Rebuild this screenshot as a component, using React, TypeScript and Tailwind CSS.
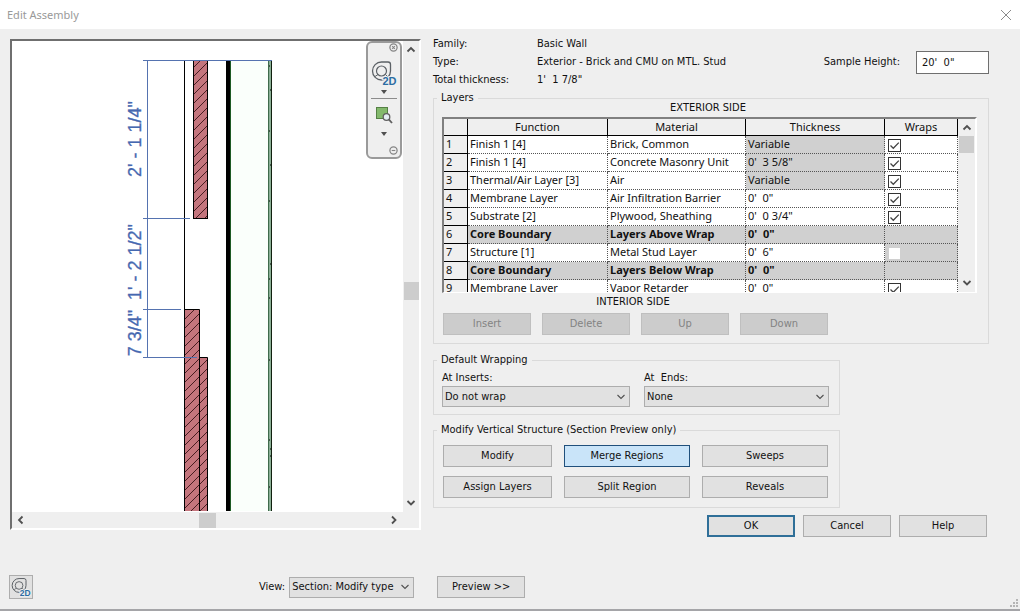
import React from 'react';

type Layer = { fn: string; material: string; thickness: string; fixed?: boolean; core?: boolean; wraps?: boolean };

const layers: Layer[] = [
  { fn: 'Finish 1 [4]', material: 'Brick, Common', thickness: 'Variable', fixed: true, wraps: true },
  { fn: 'Finish 1 [4]', material: 'Concrete Masonry Unit', thickness: '0\'  3 5/8"', fixed: true, wraps: true },
  { fn: 'Thermal/Air Layer [3]', material: 'Air', thickness: 'Variable', fixed: true, wraps: true },
  { fn: 'Membrane Layer', material: 'Air Infiltration Barrier', thickness: '0\'  0"', wraps: true },
  { fn: 'Substrate [2]', material: 'Plywood, Sheathing', thickness: '0\'  0 3/4"', wraps: true },
  { fn: 'Core Boundary', material: 'Layers Above Wrap', thickness: '0\'  0"', core: true },
  { fn: 'Structure [1]', material: 'Metal Stud Layer', thickness: '0\'  6"' },
  { fn: 'Core Boundary', material: 'Layers Below Wrap', thickness: '0\'  0"', core: true },
  { fn: 'Membrane Layer', material: 'Vapor Retarder', thickness: '0\'  0"', wraps: true },
];

const arrows = {
  up: 'M1.500 6.500 L5 3 L8.500 6.500',
  down: 'M1.500 3 L5 6.500 L8.500 3',
  left: 'M6.500 1.500 L3 5 L6.500 8.500',
  right: 'M3 1.500 L6.500 5 L3 8.500',
};

function Arrow({ dir, thin }: { dir: keyof typeof arrows; thin?: boolean }) {
  return (
    <svg viewBox="0 0 10 10" className="size-[10px] shrink-0" fill="none" stroke="#505050" strokeWidth={thin ? 1.1 : 1.8}>
      <path d={arrows[dir]} />
    </svg>
  );
}

function Button({ children, className = '', tone = 'normal' }: { children: React.ReactNode; className?: string; tone?: 'normal' | 'active' | 'default' | 'disabled' }) {
  const tones = {
    normal: 'border border-[#adadad] bg-[#e1e1e1]',
    active: 'border border-[#20507c] bg-[#c9e4f9]',
    default: 'border-2 border-[#2f6f98] bg-[#e1e1e1]',
    disabled: 'border border-[#bfbfbf] bg-[#cccccc] text-[#838383]',
  };
  return (
    <button type="button" disabled={tone === 'disabled'} className={`h-[22px] leading-4 ${tones[tone]} ${className}`}>
      {children}
    </button>
  );
}

function Select({ id, value, className = '' }: { id: string; value: string; className?: string }) {
  return (
    <div className={`relative flex items-center ${className}`}>
      <select id={id} className="h-[21px] w-full appearance-none border border-[#adadad] bg-[#e1e1e1] pl-[2px] pr-4">
        <option>{value}</option>
      </select>
      <span className="pointer-events-none absolute right-1">
        <Arrow dir="down" thin />
      </span>
    </div>
  );
}

function Group({ title, className = '', children }: { title: string; className?: string; children: React.ReactNode }) {
  return (
    <fieldset className={`border border-[#dadada] ${className}`}>
      <legend className="ml-[3px] h-2 px-1 leading-2">{title}</legend>
      {children}
    </fieldset>
  );
}

function WheelIcon({ className }: { className: string }) {
  return (
    <svg viewBox="0 0 26 26" className={className} fill="none" stroke="#5c6166">
      <path d="M10.500 2 H17 Q19.500 2 19.500 4.500 V11 A9 9 0 1 1 10.500 2 Z" strokeWidth="1.300" />
      <circle cx="10.500" cy="11" r="5" strokeWidth="1.200" />
      <path d="M4 16.500 L7 14.500 M14.500 14.500 L17 17" strokeWidth="1" />
      <text x="25.500" y="24.500" textAnchor="end" fontSize="11" fontWeight="bold" fill="#2c6da3" stroke="#efefef" strokeWidth="2" paintOrder="stroke" fontFamily="Liberation Sans, sans-serif">2D</text>
    </svg>
  );
}

function NavBar() {
  return (
    <div className="absolute top-0 right-px flex w-9 flex-col items-center rounded-md border-2 border-[#9a9a9a] bg-[#efefef] pb-[2px]">
      <svg viewBox="0 0 10 10" className="mr-[2px] size-[9px] self-end" fill="none" stroke="#858585">
        <circle cx="5" cy="5" r="4" strokeWidth="1.400" />
        <path d="M3.500 3.500 L6.500 6.500 M6.500 3.500 L3.500 6.500" strokeWidth="1.200" />
      </svg>
      <WheelIcon className="mt-[8px] size-[26px]" />
      <svg viewBox="0 0 6 4" className="mt-1 h-1 w-[6px]" fill="#505050"><path d="M0 0 H6 L3 4 Z" /></svg>
      <div className="my-[4px] h-px w-[26px] bg-[#8c8c8c]" />
      <svg viewBox="0 0 17 17" className="mt-1 size-[17px]">
        <rect x="0.500" y="0.500" width="11" height="11" fill="#83b96c" stroke="#558045" />
        <circle cx="10.500" cy="10" r="3.300" fill="#e4eef4" stroke="#606060" strokeWidth="1.300" />
        <path d="M12.800 12.400 L16 16" stroke="#606060" strokeWidth="1.800" />
      </svg>
      <svg viewBox="0 0 6 4" className="mt-[8px] h-1 w-[6px]" fill="#505050"><path d="M0 0 H6 L3 4 Z" /></svg>
      <svg viewBox="0 0 10 10" className="mt-[10px] mr-[2px] size-[9px] self-end" fill="none" stroke="#858585">
        <circle cx="5" cy="5" r="4" strokeWidth="1.400" />
        <path d="M3 5 H7" strokeWidth="1.200" />
      </svg>
    </div>
  );
}

function SectionDrawing() {
  return (
    <svg viewBox="12 41 391 471" className="block w-full">
      <defs>
        <pattern id="hatch" width="9" height="9" patternUnits="userSpaceOnUse">
          <rect width="9" height="9" fill="#c4757d" />
          <path d="M-1 10 L10 -1 M-1 1 L1 -1 M8 10 L10 8" stroke="#3a1216" strokeWidth="0.900" />
        </pattern>
      </defs>

      {/* stud cavity, sheathing and gypsum */}
      <rect x="230" y="60" width="38" height="451" fill="#fafffb" />
      <rect x="226" y="60" width="4" height="451" fill="#000" />
      <rect x="230" y="60" width="1" height="451" fill="#1d5a24" />
      <rect x="268" y="60" width="4" height="451" fill="#8aaf95" />
      <path d="M268.500 60 V511" stroke="#3f6b4c" />
      <path d="M271.500 60 V511" stroke="#10200f" />
      <path d="M269 66h1M270 90h1M269 131h1M270 165h1M269 201h1M270 264h1M269 279h1M269 298h1M269 360h1M269 440h1M270 449h1M270 456h1M269 487h1" stroke="#000" />

      {/* masonry */}
      <path d="M184.500 60 V511" stroke="#000" />
      <rect x="193.500" y="60.500" width="14" height="158" fill="url(#hatch)" stroke="#000" />
      <path d="M199.500 511 V357.500 H207.500 V511" fill="url(#hatch)" stroke="#000" />
      <path d="M184.500 511 V309.500 H199.500 V511" fill="url(#hatch)" stroke="#000" />

      {/* dimensions */}
      <path d="M147.500 60 V357 M143 60.500 H272 M143 218.500 H190 M143 309.500 H181 M143 357.500 H197" fill="none" stroke="#5573b0" />
      <g fill="#4668b0" stroke="#4668b0" strokeWidth="0.300" fontSize="18" textAnchor="middle" fontFamily="Liberation Sans, Arial, sans-serif">
        <text transform="translate(141 139) rotate(-90)">2' - 1 1/4"</text>
        <text transform="translate(141 262) rotate(-90)">1' - 2 1/2"</text>
        <text transform="translate(141 333) rotate(-90)">7 3/4"</text>
      </g>
    </svg>
  );
}

function Preview() {
  return (
    <section className="grid w-[411px] shrink-0 grid-cols-[1fr_16px] self-start border-2 border-r-white border-b-white border-t-[#6f6f6f] border-l-[#6f6f6f]">
      <div className="relative bg-white">
        <SectionDrawing />
        <NavBar />
      </div>
      <div className="flex flex-col items-center justify-between py-1">
        <Arrow dir="up" />
        <div className="mt-7 h-[18px] w-[15px] bg-[#cdcdcd]" />
        <Arrow dir="down" />
      </div>
      <div className="flex h-4 items-center justify-between px-1">
        <Arrow dir="left" />
        <div className="h-[15px] w-[17px] bg-[#cdcdcd]" />
        <Arrow dir="right" />
      </div>
    </section>
  );
}

function Wrap({ row, layer }: { row: number; layer: Layer }) {
  if (layer.core) return null;
  return (
    <span className="relative ml-px mt-[3px] block size-[13px]">
      <input
        type="checkbox"
        aria-label={`Wrap layer ${row}`}
        defaultChecked={layer.wraps}
        className={`peer block size-[13px] appearance-none border bg-white ${layer.wraps ? 'border-[#333]' : 'border-[#d0d0d0]'}`}
      />
      <svg viewBox="0 0 13 13" className="pointer-events-none absolute inset-0 hidden peer-checked:block" fill="none" stroke="#444" strokeWidth="1.300">
        <path d="M2.500 6.500 L5.300 9.300 L10.800 3.600" />
      </svg>
    </span>
  );
}

function LayersTable() {
  const th = 'border-r border-b border-black p-0 font-normal';
  const td = 'border-r border-b border-dotted border-[#555] p-0 pl-[2px] align-top';
  return (
    <div className="ml-2 mr-[11px] mt-[3px] flex h-[176px] border-t-2 border-r-2 border-b border-l-2 border-t-[#808080] border-l-[#808080] border-r-white border-b-white">
      <div className="flex-1 overflow-hidden">
        <table className="w-full table-fixed border-separate border-spacing-0 whitespace-pre font-['Noto_Sans',sans-serif] text-[11px] leading-4">
          <colgroup>
            <col className="w-6" />
            <col className="w-[140px]" />
            <col className="w-[138px]" />
            <col className="w-[139px]" />
            <col className="w-[73px]" />
          </colgroup>
          <thead>
            <tr className="h-[17px]">
              <th className={th} aria-label="Row" />
              <th className={th}>Function</th>
              <th className={th}>Material</th>
              <th className={th}>Thickness</th>
              <th className={th}>Wraps</th>
            </tr>
          </thead>
          <tbody>
            {layers.map((l, i) => (
              <tr key={i} className={`h-[18px] ${l.core ? 'bg-[#d0d0d0] font-bold' : 'bg-white'}`}>
                <td className="border-r border-b border-black bg-[#efefef] p-0 pl-[2px] align-top font-normal">{i + 1}</td>
                <td className={td}>{l.fn}</td>
                <td className={td}>{l.material}</td>
                <td className={`${td} ${l.fixed ? 'bg-[#d0d0d0]' : ''}`}>{l.thickness}</td>
                <td className={`${td} ${l.wraps ? '' : 'bg-[#d0d0d0]'}`}><Wrap row={i + 1} layer={l} /></td>
              </tr>
            ))}
          </tbody>
        </table>
      </div>
      <div className="flex w-[17px] flex-col items-center pt-1 pb-1">
        <Arrow dir="up" />
        <div className="mt-[3px] h-[17px] w-[15px] bg-[#cdcdcd]" />
        <div className="flex-1" />
        <Arrow dir="down" />
      </div>
    </div>
  );
}

export default function App() {
  return (
    <div className="flex min-h-screen flex-col border-b-2 border-[#a5a5a8] bg-[#efefef] font-['DejaVu_Sans_Condensed','DejaVu_Sans',sans-serif] text-[11px] leading-4 text-[#111]">
      <header className="flex h-[29px] items-center justify-between bg-white pl-[7px] pr-2 font-['Noto_Sans',sans-serif] text-[#999]">
        <h1>Edit Assembly</h1>
        <button type="button" aria-label="Close">
          <svg viewBox="0 0 12 12" className="size-3" stroke="#8a8a8a"><path d="M1 1 L11 11 M11 1 L1 11" /></svg>
        </button>
      </header>

      <main className="flex flex-1 gap-3 pl-[10px]">
        <div className="flex pt-[10px]">
          <Preview />
        </div>

        <div className="mr-[31px] flex-1 pt-[6px]">
          <div className="flex justify-between">
            <dl className="grid grid-cols-[104px_auto] whitespace-pre leading-[18px]">
              <dt>Family:</dt>
              <dd>Basic Wall</dd>
              <dt>Type:</dt>
              <dd>Exterior - Brick and CMU on MTL. Stud</dd>
              <dt>Total thickness:</dt>
              <dd>1'  1 7/8"</dd>
            </dl>
            <div className="flex items-center gap-4">
              <label htmlFor="height">Sample Height:</label>
              <input id="height" defaultValue={'20\'  0"'} className="h-[23px] w-[73px] border border-[#6f6f6f] bg-white px-[5px]" />
            </div>
          </div>

          <Group title="Layers" className="mt-[5px] pb-2">
            <p className="pr-[6px] text-center leading-3">EXTERIOR SIDE</p>
            <LayersTable />
            <p className="mt-px pr-[156px] text-center">INTERIOR SIDE</p>
            <div className="mx-[9px] mt-[3px] flex gap-[11px]">
              {['Insert', 'Delete', 'Up', 'Down'].map(name => (
                <Button key={name} tone="disabled" className="w-[88px]">{name}</Button>
              ))}
            </div>
          </Group>

          <Group title="Default Wrapping" className="mt-3 mr-[149px] pb-[7px]">
            <div className="mr-[10px] ml-2 grid grid-cols-[188fr_185fr] gap-x-[14px] pt-[6px]">
              <label htmlFor="inserts">At Inserts:</label>
              <label htmlFor="ends" className="whitespace-pre">At  Ends:</label>
              <Select id="inserts" value="Do not wrap" />
              <Select id="ends" value="None" />
            </div>
          </Group>

          <Group title="Modify Vertical Structure (Section Preview only)" className="mt-[11px] mr-[149px] pb-[9px]">
            <div className="mr-[11px] ml-[9px] grid grid-cols-[109fr_126fr_126fr] gap-x-3 gap-y-[9px] pt-[11px]">
              <Button>Modify</Button>
              <Button tone="active">Merge Regions</Button>
              <Button>Sweeps</Button>
              <Button>Assign Layers</Button>
              <Button>Split Region</Button>
              <Button>Reveals</Button>
            </div>
          </Group>

          <div className="mt-[7px] mr-[2px] flex justify-end gap-2">
            <Button tone="default" className="w-[88px]">OK</Button>
            <Button className="w-[88px]">Cancel</Button>
            <Button className="w-[88px]">Help</Button>
          </div>
        </div>
      </main>

      <footer className="flex items-end">
        <div className="flex items-center pb-[10px] pl-[9px]">
          <button type="button" aria-label="Navigation wheel" className="flex size-6 items-center justify-center border border-[#adadad] bg-[#e1e1e1]">
            <WheelIcon className="size-5" />
          </button>
          <label htmlFor="view" className="ml-[226px]">View:</label>
          <Select id="view" value="Section: Modify type" className="ml-1 w-[125px]" />
          <Button className="ml-[23px] w-[88px] whitespace-pre">{'Preview >>'}</Button>
        </div>
        <svg viewBox="0 0 9 9" className="mb-px ml-auto mr-px size-[9px]" fill="#b5b5b5">
          <path d="M6 0h2v2h-2zM3 3h2v2h-2zM6 3h2v2h-2zM0 6h2v2h-2zM3 6h2v2h-2zM6 6h2v2h-2z" />
        </svg>
      </footer>
    </div>
  );
}
